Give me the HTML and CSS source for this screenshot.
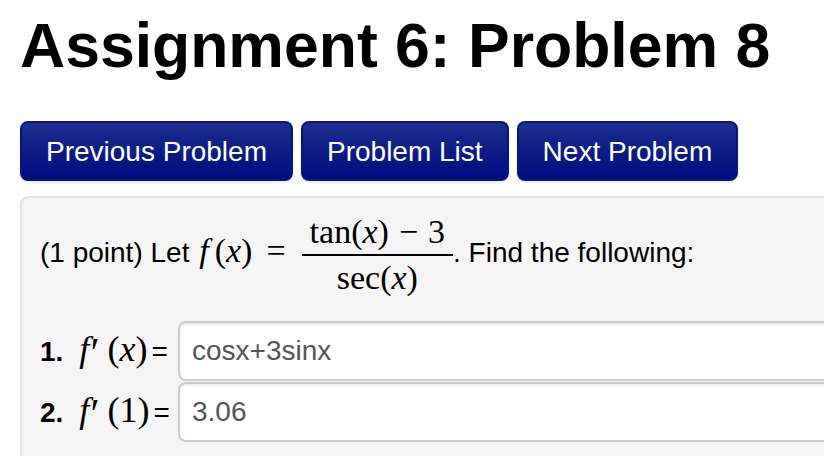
FILE: index.html
```html
<!DOCTYPE html>
<html lang="en">
<head>
  <meta charset="UTF-8" />
  <title>Assignment 6: Problem 8</title>
  <link rel="stylesheet" href="styles.css">
</head>
<body>
  <div class="page">
    <h1>Assignment 6: Problem 8</h1>

    <div class="nav">
      <button class="btn">Previous Problem</button>
      <button class="btn">Problem List</button>
      <button class="btn">Next Problem</button>
    </div>

    <div class="problem">
      <p class="statement">
        (1 point) Let <span class="math"><i class="fn">f</i>(<i>x</i>)<span class="eq">=</span></span><span class="frac"><span class="num">tan(<i>x</i>)<span class="minus">&minus;</span>3</span><span class="den">sec(<i>x</i>)</span></span>. Find the following:
      </p>

      <div class="answer">
        <span class="label"><b>1.</b><span class="math"><i class="fn">f</i><span class="prime">&prime;</span>(<i>x</i>)</span>=</span>
        <input class="field" type="text" value="cosx+3sinx">
      </div>
      <div class="answer">
        <span class="label"><b>2.</b><span class="math"><i class="fn">f</i><span class="prime">&prime;</span>(1)</span>=</span>
        <input class="field" type="text" value="3.06">
      </div>
    </div>
  </div>
</body>
</html>
```

FILE: styles.css
```css
* {
  box-sizing: border-box;
}

html {
  overflow: hidden;
}

body {
  margin: 0;
  padding: 8px 0 0 20px;
  font-family: 'Liberation Sans', Arial, sans-serif;
  color: #000;
  background: #fff;
}

.page {
  width: 900px;
}

h1 {
  margin: 0;
  font-size: 62.5px;
  line-height: 74px;
  font-weight: bold;
}

.nav {
  display: flex;
  gap: 8px;
  margin-top: 39px;
}

.btn {
  height: 60px;
  padding: 2px 24px 0;
  border: 2px solid #08157a;
  border-radius: 8px;
  background: linear-gradient(to bottom, #1b2f8d, #000a80);
  box-shadow: 0 2px 3px rgba(0, 0, 0, 0.08);
  color: #fff;
  font-family: inherit;
  font-size: 28px;
  line-height: 54px;
}

.problem {
  margin-top: 15px;
  padding: 16px 18px 30px;
  background: #f5f5f5;
  border: 2px solid #e3e3e3;
  border-radius: 8px;
  font-size: 28px;
}

.statement {
  margin: 0 0 25px;
}

.math {
  font-family: 'Liberation Serif', 'Times New Roman', serif;
  font-size: 34px;
}

.fn {
  margin: 0 6px 0 2px;
}

.eq {
  margin: 0 16px 0 14px;
}

.frac {
  display: inline-block;
  vertical-align: middle;
  text-align: center;
  font-family: 'Liberation Serif', 'Times New Roman', serif;
  font-size: 34px;
  line-height: 36px;
}

.num {
  display: block;
  padding: 0 8px 4px;
}

.minus {
  margin: 0 10px;
}

.den {
  display: block;
  padding-top: 4px;
  border-top: 2px solid #000;
}

.answer {
  display: flex;
  align-items: center;
  margin-bottom: 1px;
}

.label {
  width: 138px;
  white-space: nowrap;
}

.label b {
  margin-right: 14px;
}

.label .math {
  font-size: 36px;
  margin-right: 4px;
}

.label .fn {
  margin: 0 1px 0 2px;
}

.prime {
  display: inline-block;
  margin-right: 8px;
  font-size: 42px;
  line-height: 1;
  vertical-align: -6px;
}

.field {
  flex: 1;
  height: 60px;
  padding: 0 12px;
  border: 2px solid #ccc;
  border-radius: 8px;
  background: #fff;
  box-shadow: inset 0 2px 2px rgba(0, 0, 0, 0.075);
  color: #555;
  font-family: 'Liberation Sans', Arial, sans-serif;
  font-size: 28px;
}
```
